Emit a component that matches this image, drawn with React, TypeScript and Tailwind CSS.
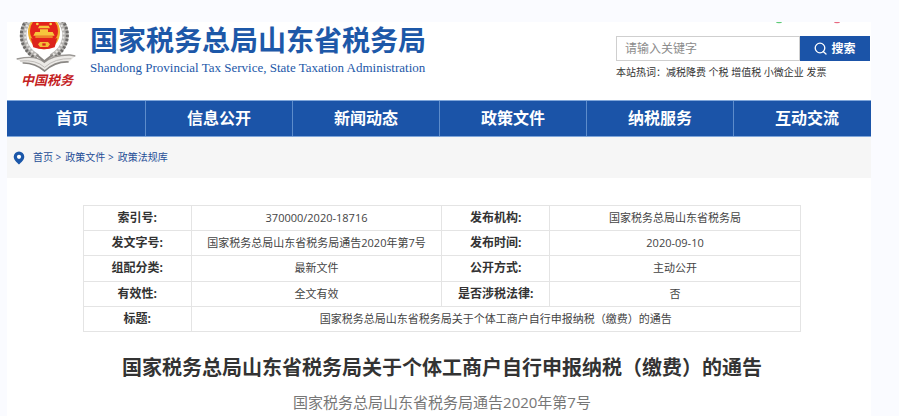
import { useState } from 'react';
import type { FormEvent } from 'react';

const navItems = ['首页', '信息公开', '新闻动态', '政策文件', '纳税服务', '互动交流'];

const hotWords = ['减税降费', '个税', '增值税', '小微企业', '发票'];

const crumbs = ['首页', '政策文件', '政策法规库'];

const infoRows = [
  ['索引号:', '370000/2020-18716', '发布机构:', '国家税务总局山东省税务局'],
  ['发文字号:', '国家税务总局山东省税务局通告2020年第7号', '发布时间:', '2020-09-10'],
  ['组配分类:', '最新文件', '公开方式:', '主动公开'],
  ['有效性:', '全文有效', '是否涉税法律:', '否'],
];

function Emblem() {
  return (
    <svg viewBox="48 36 186 150" className="block h-[50px] w-[62px]" aria-hidden="true">
      {/* wheat ears */}
      <g fill="none">
        <path d="M86 30C58 66 66 116 112 142" stroke="#b5b3b0" strokeWidth="19" />
        <path d="M180 30C208 66 200 116 154 142" stroke="#b5b3b0" strokeWidth="19" />
        <path d="M80 30C52 66 60 118 108 146" stroke="#6d6b69" strokeWidth="9" strokeDasharray="7 5" />
        <path d="M186 30C214 66 206 118 158 146" stroke="#6d6b69" strokeWidth="9" strokeDasharray="7 5" />
        <path d="M88 34C66 66 72 112 112 138" stroke="#e9e7e4" strokeWidth="6" strokeDasharray="6 6" />
        <path d="M178 34C200 66 194 112 154 138" stroke="#e9e7e4" strokeWidth="6" strokeDasharray="6 6" />
      </g>
      {/* national emblem */}
      <ellipse cx="132" cy="66" rx="48" ry="52" fill="#f0b030" />
      <circle cx="132" cy="62" r="42" fill="#e3231b" />
      <path d="M92 84Q132 100 172 84L164 112Q132 124 100 112Z" fill="#dc241b" />
      <circle cx="112" cy="42" r="4" fill="#f8d34a" />
      <circle cx="152" cy="42" r="4" fill="#f8d34a" />
      <path d="M118 47h28l4 8h-36z" fill="#f6c63c" />
      <path d="M120 58h24v8h14l6 11h-64l6-11h14z" fill="#f6c63c" />
      <path d="M106 79h52v4h-52z" fill="#f2b632" />
      <path d="M120 96h24l6 7-6 8h-24l-6-8z" fill="#f4bd35" />
      <path d="M127 100h10v7h-10z" fill="#dc241b" />
      {/* open book */}
      <path d="M50 147L72 143Q112 138 133 157Q160 134 210 135L226 138L206 156Q166 154 134 184Q104 158 68 159Z" fill="#ebe9e6" />
      <path d="M50 147L72 143Q112 138 133 157Q160 134 210 135L226 138" fill="none" stroke="#9b9895" strokeWidth="4" />
      <path d="M60 153Q108 148 134 172Q164 144 214 146" fill="none" stroke="#c0bdba" strokeWidth="3" />
      <path d="M68 159Q104 158 134 183Q166 154 206 156" fill="none" stroke="#8a8784" strokeWidth="5" />
      <path d="M110 134L133 154L158 134" fill="none" stroke="#8a8784" strokeWidth="6" />
    </svg>
  );
}

function PinIcon() {
  return (
    <svg viewBox="0 0 12 14" className="h-[14px] w-3 shrink-0" aria-hidden="true">
      <path d="M6 0.5a5.3 5.3 0 0 1 5.3 5.2C11.300 8.700 8.200 11.300 6 13.600 3.800 11.300.7 8.700.7 5.700A5.300 5.300 0 0 1 6 .5Z" fill="#1b57a9" />
      <circle cx="6" cy="5.800" r="2.100" fill="#fff" />
    </svg>
  );
}

function SearchBox() {
  const [keyword, setKeyword] = useState('');

  const handleSubmit = (e: FormEvent) => {
    e.preventDefault();
  };

  return (
    <div className="w-[254px] shrink-0">
      <div className="flex h-[14px] justify-end gap-[50px] pr-[29px]" aria-hidden="true">
        <svg viewBox="0 0 8 2" className="h-[2px] w-2">
          <ellipse cx="4" cy="0" rx="3" ry="1.200" fill="#5fcb77" />
        </svg>
        <svg viewBox="0 0 8 2" className="h-[2px] w-2">
          <ellipse cx="4" cy="0" rx="3" ry="1.200" fill="#e86a80" />
        </svg>
      </div>
      <form onSubmit={handleSubmit} className="flex h-[25px]">
        <input
          type="text"
          aria-label="请输入关键字"
          placeholder="请输入关键字"
          value={keyword}
          onChange={(e) => setKeyword(e.target.value)}
          className="min-w-0 flex-1 border border-[#cfcfcf] bg-white px-2 text-xs text-[#333] outline-none placeholder:text-[#8c8c8c]"
        />
        <button type="submit" className="flex w-[70px] items-center justify-center gap-1 bg-[#1b54a8] text-xs font-bold text-white">
          <svg viewBox="0 0 13 13" className="h-[13px] w-[13px]" fill="none" stroke="#fff" strokeWidth="1.300" aria-hidden="true">
            <circle cx="6" cy="6" r="4.800" />
            <path d="M9.200 9.600L12 12" strokeLinecap="round" />
          </svg>
          搜索
        </button>
      </form>
      <p className="mt-[3px] whitespace-nowrap text-[10px] leading-4 text-[#333]">
        本站热词：
        {hotWords.map((word) => (
          <span key={word}>
            <a href="#">{word}</a>{' '}
          </span>
        ))}
      </p>
    </div>
  );
}

export default function App() {
  return (
    <div className="min-h-screen bg-[#fafbff] pt-[22px] pr-7 pl-[7px] font-['Open_Sans','Noto_Sans_CJK_SC',sans-serif]">
      <div className="min-h-[394px] bg-white">
        <header className="flex h-[78px] justify-between pr-px pl-[9px]">
          <div className="flex">
            <div className="w-[62px]">
              <Emblem />
              <p className="text-center text-[13px] leading-4 font-bold italic text-[#c4221f]">中国税务</p>
            </div>
            <div className="ml-3 whitespace-nowrap text-[#1d58a8]">
              <p className="text-[28px] leading-9 font-bold">国家税务总局山东省税务局</p>
              <p className="font-['Liberation_Serif',serif] text-[13px] leading-5">
                Shandong Provincial Tax Service, State Taxation Administration
              </p>
            </div>
          </div>
          <SearchBox />
        </header>

        <nav className="overflow-hidden border-y border-[#7fa6da] bg-[#1b54a8]">
          <ul className="-mr-[10px] -ml-2 grid grid-cols-6">
            {navItems.map((item) => (
              <li key={item} className="border-r border-[#5d8ccb]">
                <a href="#" className="block text-center text-base leading-[35px] font-bold text-white">
                  {item}
                </a>
              </li>
            ))}
          </ul>
        </nav>

        <div className="flex h-[41px] items-center gap-2 bg-[#f6f6f6] pl-[6px] text-[10px] text-[#1f4e96]">
          <PinIcon />
          <div className="flex gap-1">
            {crumbs.map((crumb, i) => (
              <span key={crumb}>
                <a href="#">{crumb}</a>
                {i < crumbs.length - 1 && ' >'}
              </span>
            ))}
          </div>
        </div>

        <main className="pt-[27px] pr-[70px] pl-[76px] text-center">
          <table className="h-[127px] w-full table-fixed border-collapse text-[11px] leading-6 text-[#444]">
            <colgroup>
              <col className="w-[15%]" />
              <col className="w-[35%]" />
              <col className="w-[15%]" />
              <col className="w-[35%]" />
            </colgroup>
            <tbody>
              {infoRows.map(([labelA, valueA, labelB, valueB]) => (
                <tr key={labelA}>
                  <th className="border border-[#e4e4e4] text-xs leading-6 font-bold text-[#333]">{labelA}</th>
                  <td className="border border-[#e4e4e4]">{valueA}</td>
                  <th className="border border-[#e4e4e4] text-xs leading-6 font-bold text-[#333]">{labelB}</th>
                  <td className="border border-[#e4e4e4]">{valueB}</td>
                </tr>
              ))}
              <tr>
                <th className="border border-[#e4e4e4] text-xs leading-6 font-bold text-[#333]">标题:</th>
                <td colSpan={3} className="border border-[#e4e4e4]">
                  国家税务总局山东省税务局关于个体工商户自行申报纳税（缴费）的通告
                </td>
              </tr>
            </tbody>
          </table>

          <h1 className="mt-5 text-xl leading-8 font-bold text-[#333]">
            国家税务总局山东省税务局关于个体工商户自行申报纳税（缴费）的通告
          </h1>
          <p className="mt-1 text-[15px] leading-7 text-[#777]">国家税务总局山东省税务局通告2020年第7号</p>
        </main>
      </div>
    </div>
  );
}
